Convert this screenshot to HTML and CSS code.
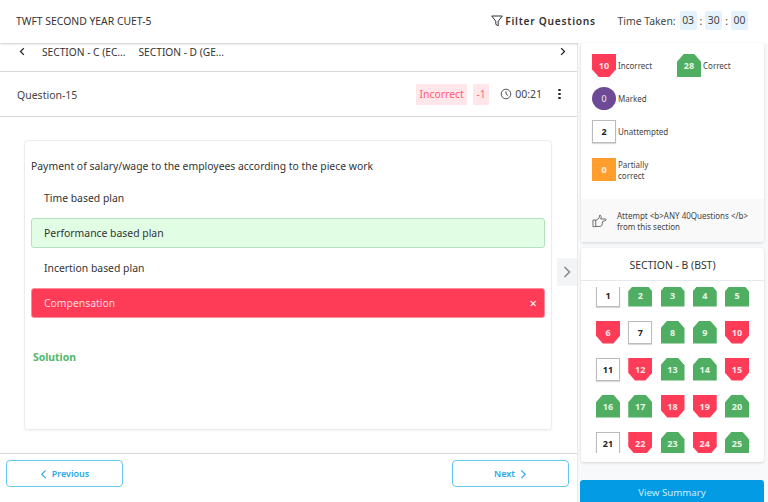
FILE: index.html
```html
<!DOCTYPE html>
<html lang="en">
<head>
<meta charset="utf-8">
<title>TWFT SECOND YEAR CUET-5</title>
<link rel="stylesheet" href="styles.css">
</head>
<body>
<header class="topbar">
  <div class="test-title">TWFT SECOND YEAR CUET-5</div>
  <div class="filter">
    <svg class="filter-icon" viewBox="0 0 12 12"><path d="M.7 1h10.600L7.200 6.200v4.600L4.800 9.400V6.200z"/></svg>
    <span>Filter Questions</span>
  </div>
  <div class="timer">
    <span class="timer-label">Time Taken:</span>
    <span class="time-box">03</span><span class="colon">:</span>
    <span class="time-box">30</span><span class="colon">:</span>
    <span class="time-box">00</span>
  </div>
</header>
<div class="layout">
  <main class="left">
    <nav class="tabs">
      <svg class="chev tab-prev" viewBox="0 0 8 12"><path d="M6.500 1.500 2 6l4.500 4.500"/></svg>
      <span class="tab">SECTION - C (EC...</span>
      <span class="tab">SECTION - D (GE...</span>
      <svg class="chev tab-next" viewBox="0 0 8 12"><path d="M1.500 1.500 6 6l-4.500 4.500"/></svg>
    </nav>
    <div class="q-head">
      <span class="q-name">Question-15</span>
      <span class="tag tag-word">Incorrect</span>
      <span class="tag tag-mark">-1</span>
      <svg class="clock" viewBox="0 0 12 12"><circle cx="6" cy="6" r="4.800"/><path d="M6 3.200V6l2 1.600"/></svg>
      <span class="q-time">00:21</span>
      <span class="dots"><i></i><i></i><i></i></span>
    </div>
    <section class="q-body">
      <article class="q-card">
        <p class="q-text">Payment of salary/wage to the employees according to the piece work</p>
        <div class="opt">Time based plan</div>
        <div class="opt opt-right">Performance based plan</div>
        <div class="opt">Incertion based plan</div>
        <div class="opt opt-wrong">Compensation<span class="cross">×</span></div>
        <div class="solution">Solution</div>
      </article>
    </section>
    <footer class="q-foot">
      <button class="nav-btn"><svg class="chev" viewBox="0 0 8 12"><path d="M6.500 1.500 2 6l4.500 4.500"/></svg>Previous</button>
      <button class="nav-btn">Next<svg class="chev" viewBox="0 0 8 12"><path d="M1.500 1.500 6 6l-4.500 4.500"/></svg></button>
    </footer>
  </main>
  <aside class="right">
    <div class="collapse"><svg viewBox="0 0 8 12"><path d="M1.500 1 6.500 6l-5 5"/></svg></div>
    <div class="card legend">
      <div class="legend-grid">
        <div class="leg leg-half"><span class="b red">10</span><span>Incorrect</span></div>
        <div class="leg leg-half"><span class="b green">28</span><span>Correct</span></div>
        <div class="leg"><span class="b purple">0</span><span>Marked</span></div>
        <div class="leg"><span class="b white">2</span><span>Unattempted</span></div>
        <div class="leg leg-partial"><span class="b orange">0</span><span class="partial">Partially<br>correct</span></div>
      </div>
      <div class="hint">
        <svg class="thumb" viewBox="0 0 16 14"><path d="M1 6h3v7H1zM4 6.500 7.500 4 8.200.800c1.300 0 1.800 1 1.500 2.200L9.300 4.800h4.900c1 0 1.200 1.200.4 1.500L11.500 7.300l-1 4.200c-.2.800-.8 1.300-1.600 1.300H4"/></svg>
        <span>Attempt &lt;b&gt;ANY 40Questions &lt;/b&gt;<br>from this section</span>
      </div>
    </div>
    <div class="card palette">
      <div class="pal-title">SECTION - B (BST)</div>
      <div class="pal-window">
        <div class="pal-grid">
          <span class="b white">1</span><span class="b green">2</span><span class="b green">3</span><span class="b green">4</span><span class="b green">5</span>
          <span class="b red">6</span><span class="b white">7</span><span class="b green">8</span><span class="b green">9</span><span class="b red">10</span>
          <span class="b white">11</span><span class="b red">12</span><span class="b green">13</span><span class="b green">14</span><span class="b red">15</span>
          <span class="b green">16</span><span class="b green">17</span><span class="b red">18</span><span class="b red">19</span><span class="b green">20</span>
          <span class="b white">21</span><span class="b red">22</span><span class="b green">23</span><span class="b red">24</span><span class="b green">25</span>
        </div>
      </div>
    </div>
    <button class="summary">View Summary</button>
  </aside>
</div>
</body>
</html>
```
FILE: styles.css
```css
* { box-sizing: border-box; }
html, body { margin: 0; height: 502px; overflow: hidden; }
body { font-family: "Noto Sans", "Open Sans", sans-serif; color: #333; background: #fff; font-size: 10.4px; }
svg { display: block; fill: none; stroke: currentColor; }

.topbar { height: 43px; display: flex; align-items: center; padding: 0 20px 2px 16px; box-shadow: 0 1px 2px rgba(0,0,0,.2); position: relative; }
.test-title { font-size: 10.4px; flex: 1; color: #333; }
.filter { display: flex; align-items: center; gap: 2px; font-size: 10.2px; font-weight: 600; letter-spacing: .75px; margin-right: 21.6px; color: #333; }
.filter-icon { width: 12px; height: 12px; stroke-width: 1; }
.timer { display: flex; align-items: center; font-size: 10.4px; color: #444; }
.timer-label { margin-right: 4px; }
.time-box { width: 17px; height: 19px; background: #e4f3fb; border-radius: 2px; text-align: center; line-height: 19px; }
.colon { width: 8.7px; text-align: center; }

.layout { display: flex; height: 459px; }
.left { width: 578px; display: flex; flex-direction: column; border-right: 1px solid #e8e8e8; }
.tabs { height: 29px; display: flex; align-items: center; padding: 0 11px 10px 19px; border-bottom: 1px solid #d9d9d9; font-size: 10.2px; color: #333; }
.chev { width: 6px; height: 9px; stroke-width: 1.700; }
.tab-prev { margin-right: 17px; color: #222; }
.tab { margin-right: 13px; }
.tab-next { margin-left: auto; color: #222; }

.q-head { height: 46px; display: flex; align-items: center; padding: 0 16px 0 17px; border-bottom: 1px solid #d9d9d9; }
.q-name { font-size: 10.5px; flex: 1; color: #444; margin-top: 1px; }
.tag { height: 21px; line-height: 21px; background: #ffe6ea; color: #ff5a72; font-size: 10.4px; text-align: center; border-radius: 1px; }
.tag-word { width: 51px; margin-right: 6px; }
.tag-mark { width: 16px; margin-right: 11px; }
.clock { width: 12px; height: 12px; stroke-width: .9; color: #444; margin-right: 3px; }
.q-time { font-size: 10.5px; color: #444; margin-right: 16px; }
.dots { display: flex; flex-direction: column; gap: 1.500px; width: 3px; }
.dots i { width: 3px; height: 2.500px; border-radius: 50%; background: #222; }

.q-body { flex: 1; padding: 23px 25px 23px 24px; }
.q-card { height: 290px; border: 1px solid #ececec; border-radius: 4px; padding: 18px 6px 0 6px; box-shadow: 0 1px 2px rgba(0,0,0,.05); }
.q-text { margin: 0 0 8.5px; font-size: 10.4px; line-height: 15px; color: #333; }
.opt { height: 30px; line-height: 28px; padding: 0 12px; margin-bottom: 5px; font-size: 10.4px; border: 1px solid transparent; border-radius: 3px; position: relative; color: #333; }
.opt-right { background: #e1fde4; border-color: #b5e0bb; }
.opt-wrong { background: #ff3c58; border-color: #ff8c9c; color: #ffd9df; }
.cross { position: absolute; right: 7px; top: 0; color: #fff; font-size: 13px; }
.solution { margin: 32px 0 0 2px; color: #4fb86b; font-weight: 700; font-size: 10.4px; line-height: 15px; }

.q-foot { height: 49px; border-top: 1px solid #d9d9d9; display: flex; justify-content: space-between; align-items: flex-start; padding: 6px 8px 0 6px; }
.nav-btn { width: 117px; height: 27px; background: #fff; border: 1px solid #66c6f2; border-radius: 4px; color: #28a7e8; font: 600 9px "Noto Sans", sans-serif; display: flex; align-items: center; justify-content: center; gap: 5px; }
.nav-btn .chev { width: 7px; height: 10.5px; stroke-width: 1.300; }

.right { position: relative; flex: 1; background: #f8f9fa; padding: 0 4px 0 3px; min-width: 0; }
.collapse { position: absolute; left: -21px; top: 215px; width: 20px; height: 28px; background: #f3f4f6; display: flex; align-items: center; justify-content: center; color: #8a8a8a; }
.collapse svg { width: 8px; height: 12px; stroke-width: 1.600; }
.card { background: #fff; border-radius: 3px; box-shadow: 0 1px 3px rgba(0,0,0,.15); }
.legend { height: 199px; display: flex; flex-direction: column; }
.legend-grid { flex: 1; display: flex; flex-wrap: wrap; align-content: flex-start; padding: 11px 0 0 11px; row-gap: 10px; }
.leg { width: 100%; display: flex; align-items: center; gap: 2px; font-size: 8px; color: #444; height: 23px; }
.leg-half { width: 85px; }
.leg-partial { margin-top: 5px; }
.partial { line-height: 11px; }
.hint { height: 43px; background: #f9f9f9; display: flex; align-items: center; gap: 10px; padding: 0 11px; font-size: 8px; line-height: 11px; color: #444; }
.thumb { width: 15px; height: 14px; stroke-width: .8; flex: none; color: #444; }

.palette { height: 214px; margin-top: 6px; overflow: hidden; }
.pal-title { height: 33px; line-height: 35px; text-align: center; font-size: 10.4px; border-bottom: 1px solid #e8e8e8; color: #333; }
.pal-window { height: 166px; margin-top: 6px; overflow: hidden; padding: 0 15px; }
.pal-grid { display: grid; grid-template-columns: repeat(5, 24px); justify-content: space-between; row-gap: 14px; margin-top: -3.5px; }

.b { flex: none; width: 24px; height: 23px; display: flex; align-items: center; justify-content: center; font-size: 9px; font-weight: 700; color: #e6f7ea; }
.leg > .b { margin-right: 0; }
.red { background: #ff3c58; color: #ffe3e7; clip-path: polygon(0 0, 100% 0, 100% 66%, 72% 100%, 28% 100%, 0 66%); }
.green { background: #4fae62; clip-path: polygon(28% 0, 72% 0, 100% 34%, 100% 100%, 0 100%, 0 34%); }
.purple { background: #6e4a96; border-radius: 50%; font-weight: 400; color: #eee; }
.white { background: #fff; border: 1px solid #bbb; color: #222; box-shadow: 0 1px 1px rgba(0,0,0,.15); }
.orange { background: #ff9e2c; color: #fff3e0; }

.summary { display: block; width: 184px; height: 24px; margin: 18px 0 0 -1px; background: #049be5; color: #cdeefc; border: 0; border-radius: 3px 3px 0 0; font: 400 9.7px "Noto Sans", sans-serif; }
```
